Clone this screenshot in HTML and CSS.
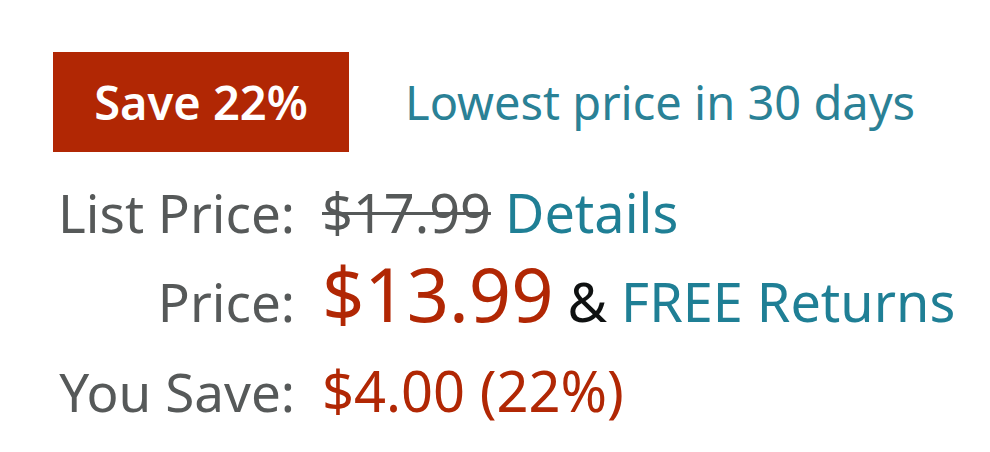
FILE: index.html
```html
<!DOCTYPE html>
<html>
<head>
<meta charset="utf-8">
<link rel="stylesheet" href="styles.css">
</head>
<body>
<div class="wrap">
  <div class="top">
    <div class="badge">Save 22%</div>
    <div class="lowest">Lowest price in 30 days</div>
  </div>
  <div class="table">
    <div class="label">List Price:</div>
    <div class="value"><span class="strike">$17.99</span> <span class="link">Details</span></div>
    <div class="label">Price:</div>
    <div class="value"><span class="price">$13.99</span> <span class="amp">&amp;</span> <span class="link">FREE Returns</span></div>
    <div class="label">You Save:</div>
    <div class="value"><span class="save">$4.00 (22%)</span></div>
  </div>
</div>
</body>
</html>
```
FILE: styles.css
```css
html, body {
  margin: 0;
  padding: 0;
  background: #ffffff;
}
body {
  font-family: "Noto Sans", "Open Sans", sans-serif;
}
.wrap {
  padding: 52px 0 0 53px;
}
.top {
  display: flex;
  align-items: center;
  gap: 56px;
}
.badge {
  width: 296px;
  height: 100px;
  background: #b12704;
  color: #ffffff;
  font-weight: 600;
  font-size: 47px;
  display: flex;
  align-items: center;
  justify-content: center;
}
.lowest {
  color: #2a8196;
  font-size: 47px;
}
.table {
  display: grid;
  grid-template-columns: 242px auto;
  grid-auto-rows: 89px;
  column-gap: 27px;
  margin-top: 16px;
  align-items: baseline;
}
.label {
  text-align: right;
  color: #565959;
  font-size: 53px;
  line-height: 89px;
  white-space: nowrap;
}
.value {
  font-size: 54px;
  line-height: 89px;
  white-space: nowrap;
}
.strike {
  color: #565959;
  text-decoration: line-through;
  text-decoration-thickness: 3px;
}
.link {
  color: #1f7f95;
}
.price {
  color: #b12704;
  font-size: 74px;
  line-height: 1;
}
.amp {
  color: #0f1111;
}
.save {
  color: #b12704;
  font-size: 56px;
}
```
